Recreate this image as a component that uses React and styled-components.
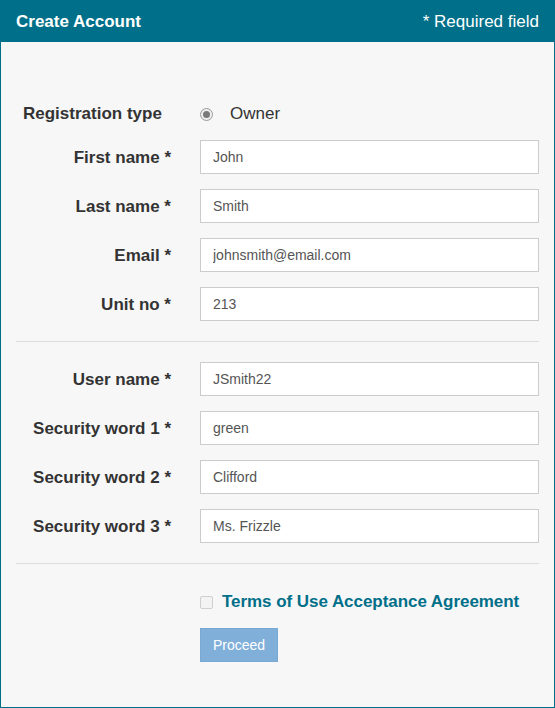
import React from 'react';
import styled, { createGlobalStyle } from 'styled-components';

const GlobalStyle = createGlobalStyle`
  body {
    margin: 0;
    background: #ffffff;
    font-family: "Liberation Sans", Arial, sans-serif;
  }
`;

const teal = '#006f89';

const Panel = styled.div`
  box-sizing: border-box;
  width: 555px;
  min-height: 708px;
  border: 1px solid ${teal};
  border-top: 0;
  background: #f7f7f7;
`;

const Header = styled.header`
  box-sizing: border-box;
  height: 42px;
  margin: 0 -1px;
  padding: 2px 16px 0;
  background: ${teal};
  color: #fff;
  display: flex;
  justify-content: space-between;
  align-items: center;
  font-size: 17px;
`;

const Title = styled.h1`
  margin: 0;
  font-size: 17px;
  font-weight: bold;
`;

const Body = styled.form`
  padding: 54px 15px 30px;
`;

const Row = styled.div`
  display: grid;
  grid-template-columns: 155px 1fr;
  column-gap: 29px;
  align-items: center;
  height: 34px;
  margin-bottom: ${(p) => p.$gap ?? 15}px;

  &:last-child {
    margin-bottom: 0;
  }
`;

const Label = styled.label`
  padding-top: 2px;
  font-size: 17px;
  font-weight: bold;
  color: #333;
  text-align: ${(p) => (p.$left ? 'left' : 'right')};
  padding-left: ${(p) => (p.$left ? '7px' : '0')};
  white-space: nowrap;
`;

const Input = styled.input`
  box-sizing: border-box;
  width: 100%;
  height: 34px;
  padding: 0 12px;
  border: 1px solid #cccccc;
  border-radius: 0;
  background: #fff;
  font-family: "Liberation Sans", Arial, sans-serif;
  font-size: 14px;
  color: #555;
  outline: none;
`;

const Choice = styled.div`
  display: flex;
  align-items: center;
  gap: 17px;
  padding-top: 2px;
  font-size: 17px;
  color: #333;
`;

const Radio = styled.span`
  box-sizing: border-box;
  width: 13px;
  height: 13px;
  border-radius: 50%;
  border: 1px solid #9a9a9a;
  background: #eee;
  display: flex;
  align-items: center;
  justify-content: center;

  &::after {
    content: '';
    width: 7px;
    height: 7px;
    border-radius: 50%;
    background: #7a7a7a;
  }
`;

const Divider = styled.hr`
  margin: 20px 0;
  border: 0;
  border-top: 1px solid #dddddd;
`;

const Actions = styled.div`
  padding-left: 184px;
  padding-top: 6px;
  display: flex;
  flex-direction: column;
  align-items: flex-start;
  gap: 14px;
`;

const Agree = styled.label`
  display: flex;
  align-items: center;
  gap: 9px;
  height: 24px;
  font-size: 17px;
  font-weight: bold;
  letter-spacing: -0.05px;
  color: ${teal};
`;

const Box = styled.span`
  box-sizing: border-box;
  width: 13px;
  height: 13px;
  border: 1px solid #cfcfcf;
  border-radius: 2px;
  background: #f3f3f3;
`;

const Button = styled.button`
  box-sizing: border-box;
  height: 34px;
  padding: 0 12px;
  border: 1px solid #78a9d3;
  border-radius: 0;
  background: #80b0da;
  color: #fff;
  font-family: "Liberation Sans", Arial, sans-serif;
  font-size: 14px;
  cursor: not-allowed;
`;

const account = [
  { label: 'First name *', value: 'John' },
  { label: 'Last name *', value: 'Smith' },
  { label: 'Email *', value: 'johnsmith@email.com' },
  { label: 'Unit no *', value: '213' },
];

const security = [
  { label: 'User name *', value: 'JSmith22' },
  { label: 'Security word 1 *', value: 'green' },
  { label: 'Security word 2 *', value: 'Clifford' },
  { label: 'Security word 3 *', value: 'Ms. Frizzle' },
];

const Fields = ({ items }) => (
  <div>
    {items.map((f) => (
      <Row key={f.label}>
        <Label>{f.label}</Label>
        <Input defaultValue={f.value} />
      </Row>
    ))}
  </div>
);

const App = () => {
  return (
    <>
      <GlobalStyle />
      <Panel>
        <Header>
          <Title>Create Account</Title>
          <span>* Required field</span>
        </Header>
        <Body onSubmit={(e) => e.preventDefault()}>
          <Row $gap={10}>
            <Label $left>Registration type</Label>
            <Choice>
              <Radio />
              Owner
            </Choice>
          </Row>
          <Fields items={account} />
          <Divider />
          <Fields items={security} />
          <Divider />
          <Actions>
            <Agree>
              <Box />
              Terms of Use Acceptance Agreement
            </Agree>
            <Button type="submit" disabled>Proceed</Button>
          </Actions>
        </Body>
      </Panel>
    </>
  );
};

export default App;
